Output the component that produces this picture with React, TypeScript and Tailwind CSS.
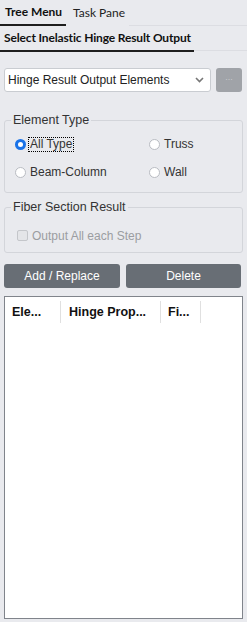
import React from 'react';

const ui = { fontFamily: '"Liberation Sans", Arial, sans-serif' };
const head = { fontFamily: 'Lato, "Noto Sans", sans-serif' };

const Radio = ({ checked, label, focus }: { checked?: boolean; label: string; focus?: boolean }) => (
  <div className="flex items-center gap-[3px]">
    {checked ? (
      <span className="w-[11px] h-[11px] rounded-full bg-[#1a73e8] flex items-center justify-center">
        <span className="w-[5px] h-[5px] rounded-full bg-white" />
      </span>
    ) : (
      <span className="w-[11px] h-[11px] rounded-full bg-white border border-[#b9bcc2]" />
    )}
    <span className={`text-[12px] leading-[13px] text-[#333] px-[1px] ${focus ? 'outline outline-1 outline-dotted outline-black' : ''}`}>
      {label}
    </span>
  </div>
);

const App: React.FC = () => {
  return (
    <div className="w-[247px] h-[622px] bg-[#e9eaee] flex flex-col overflow-hidden" style={ui}>
      <div className="flex items-end h-[26px] whitespace-nowrap" style={head}>
        <div className="w-[66px] h-[26px] flex items-center pl-[5px] border-b-2 border-[#1e1e1e] text-[12px] font-bold text-[#111]">
          Tree Menu
        </div>
        <div className="w-[63px] h-[26px] flex items-center pl-[7px] text-[12px] text-[#222]">Task Pane</div>
        <div className="flex-1 border-b border-[#dcdde2]" />
      </div>
      <div className="flex items-end h-[26px] whitespace-nowrap" style={head}>
        <div className="w-[194px] h-[26px] flex items-center pl-[4px] border-b-2 border-[#1e1e1e] text-[12px] font-bold text-[#111] tracking-[-0.15px]">
          Select Inelastic Hinge Result Output
        </div>
        <div className="flex-1 border-b border-[#dcdde2] mb-[1px]" />
      </div>

      <div className="flex gap-[5px] px-[4px] mt-[16px]">
        <div className="w-[207px] h-[24px] bg-white border border-[#c9ccd1] rounded-[3px] flex items-center justify-between pl-[3px] pr-[6px]">
          <span className="text-[12px] text-[#222]">Hinge Result Output Elements</span>
          <svg width="9" height="6" viewBox="0 0 9 6">
            <path d="M1 1l3.5 3.5L8 1" fill="none" stroke="#777" strokeWidth="1.6" />
          </svg>
        </div>
        <div className="w-[26px] h-[24px] bg-[#a0a3a8] rounded-[3px] flex items-center justify-center text-[9px] text-[#c8cacd] pb-[4px]">
          ...
        </div>
      </div>

      <fieldset className="mx-[4px] mt-[19px] h-[82px] border border-[#d3d5da] rounded-[3px] px-[10px]">
        <legend className="text-[12.5px] text-[#333] px-[2px] ml-[-4px]">Element Type</legend>
        <div className="grid grid-cols-[134px_1fr] gap-y-[15px] mt-[8px]">
          <Radio checked focus label="All Type" />
          <Radio label="Truss" />
          <Radio label="Beam-Column" />
          <Radio label="Wall" />
        </div>
      </fieldset>

      <fieldset className="mx-[4px] mt-[5px] h-[55px] border border-[#d3d5da] rounded-[3px] px-[12px]">
        <legend className="text-[12.5px] text-[#333] px-[2px] ml-[-6px]">Fiber Section Result</legend>
        <div className="flex items-center gap-[4px] mt-[10px]">
          <span className="w-[11px] h-[11px] rounded-[2px] border border-[#c4c6ca] bg-[#e4e5e8]" />
          <span className="text-[12px] text-[#9b9da1]">Output All each Step</span>
        </div>
      </fieldset>

      <div className="flex gap-[6px] px-[4px] mt-[11px]">
        <div className="w-[116px] h-[24px] bg-[#686e75] rounded-[3px] flex items-center justify-center text-[12px] text-white">
          Add / Replace
        </div>
        <div className="w-[115px] h-[24px] bg-[#686e75] rounded-[3px] flex items-center justify-center text-[12px] text-white">
          Delete
        </div>
      </div>

      <div className="mx-[4px] mt-[8px] h-[323px] bg-white border border-[#80848b]">
        <div className="flex h-[28px] items-center text-[12.5px] font-bold text-[#111] pt-[2px]">
          <div className="w-[56px] pl-[7px] border-r border-[#e0e0e0] h-[22px] flex items-center">Ele...</div>
          <div className="w-[100px] pl-[8px] border-r border-[#e0e0e0] h-[22px] flex items-center">Hinge Prop...</div>
          <div className="w-[40px] pl-[7px] border-r border-[#e0e0e0] h-[22px] flex items-center">Fi...</div>
        </div>
      </div>
    </div>
  );
};

export default App;
